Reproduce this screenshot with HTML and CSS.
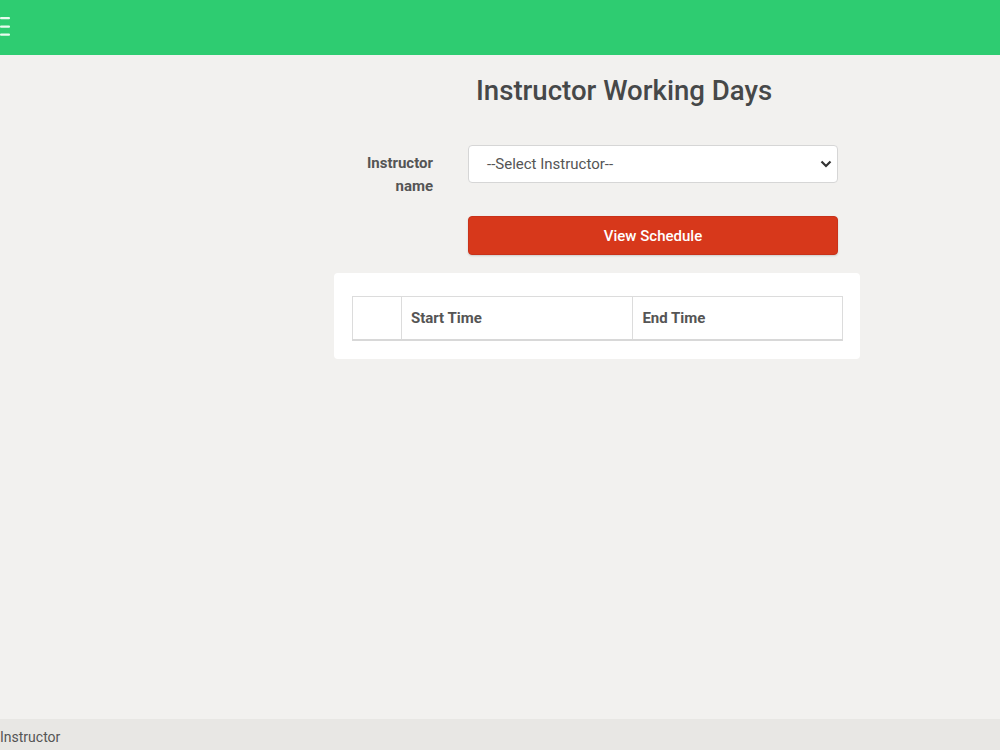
FILE: index.html
```html
<!DOCTYPE html>
<html>
<head>
<meta charset="utf-8">
<link rel="stylesheet" href="styles.css">
</head>
<body>
<header class="topbar">
  <svg class="burger" width="10" height="22" viewBox="0 0 10 22"><rect x="0" y="1" width="10" height="2.2" rx="1" fill="#e9fbef"/><rect x="0" y="9.5" width="10" height="2.2" rx="1" fill="#e9fbef"/><rect x="0" y="17.5" width="10" height="2.2" rx="1" fill="#e9fbef"/></svg>
</header>
<main class="content">
  <div class="sidebar-space"></div>
  <section class="panel">
    <h1 class="title">Instructor Working Days</h1>
    <div class="form-row">
      <label class="label">Instructor<br>name</label>
      <div class="control">
        <div class="select">
          <span>--Select Instructor--</span>
          <svg width="12" height="8" viewBox="0 0 12 8"><path d="M1.5 1.5 L6 6 L10.5 1.5" fill="none" stroke="#333" stroke-width="2.2"/></svg>
        </div>
      </div>
    </div>
    <div class="form-row btn-row">
      <div class="label"></div>
      <div class="control"><button class="btn">View Schedule</button></div>
    </div>
    <div class="card">
      <table class="table">
        <thead>
          <tr><th class="c1"></th><th class="c2">Start Time</th><th class="c3">End Time</th></tr>
        </thead>
      </table>
    </div>
  </section>
</main>
<footer class="footer">Instructor</footer>
</body>
</html>
```
FILE: styles.css
```css
* { box-sizing: border-box; }
html, body { margin: 0; padding: 0; height: 100%; }
body {
  font-family: Roboto, "Liberation Sans", sans-serif;
  background: #f2f1ef;
  color: #444;
  display: flex;
  flex-direction: column;
  width: 1000px;
  height: 750px;
  overflow: hidden;
}
.topbar {
  height: 55px;
  background: #2ecc71;
  display: flex;
  align-items: flex-start;
  flex-shrink: 0;
}
.burger { margin-top: 16px; display: block; }
.content { flex: 1; display: flex; }
.sidebar-space { width: 334px; flex-shrink: 0; }
.panel { width: 526px; display: flex; flex-direction: column; }
.title {
  margin: 20px 0 0 142px;
  font-size: 27.6px;
  font-weight: 500;
  color: #464849;
  line-height: 32px;
}
.form-row { display: flex; margin-top: 38px; }
.label {
  width: 99px;
  text-align: right;
  font-size: 15px;
  font-weight: 700;
  color: #555;
  line-height: 23px;
  padding-top: 7px;
  flex-shrink: 0;
}
.control { margin-left: 35px; width: 370px; }
.select {
  height: 38px;
  background: #fff;
  border: 1px solid #d6d6d6;
  border-radius: 4px;
  display: flex;
  align-items: center;
  justify-content: space-between;
  padding: 0 5px 0 18px;
  font-size: 15px;
  color: #555;
}
.btn-row { margin-top: 18px; }
.btn-row .label { padding-top: 0; }
.btn {
  width: 370px;
  height: 39px;
  background: #d7381b;
  border: 1px solid #c9321a;
  border-radius: 4px;
  color: #fff;
  font-family: Roboto, "Liberation Sans", sans-serif;
  font-size: 15px;
  font-weight: 500;
  display: block;
  box-shadow: 0 1px 2px rgba(0,0,0,0.15);
}
.card {
  margin-top: 18px;
  background: #fff;
  border-radius: 4px;
  padding: 23px 17px 18px 18px;
}
.table {
  width: 491px;
  border-collapse: collapse;
  font-size: 15px;
}
.table th {
  height: 43px;
  border: 1px solid #dcdcdc;
  border-bottom: 2px solid #d8d8d8;
  text-align: left;
  padding: 0 9px;
  font-weight: 700;
  color: #555;
}
.c1 { width: 49px; }
.c2 { width: 232px; }
.c3 { width: 210px; }
.footer {
  height: 31px;
  background: #e8e7e4;
  font-size: 14px;
  color: #555;
  line-height: 36px;
  flex-shrink: 0;
}
```
